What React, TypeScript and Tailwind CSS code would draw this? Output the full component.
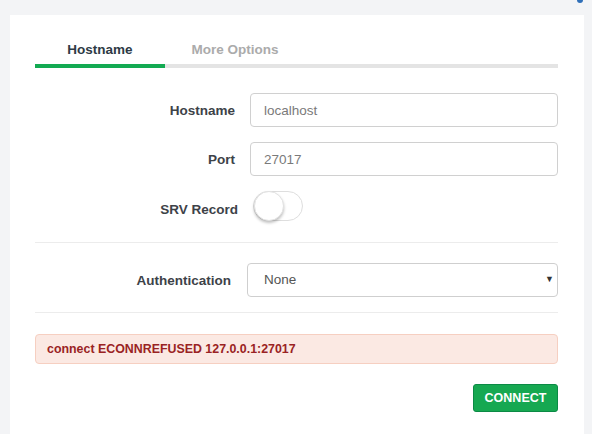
import React from 'react'

const font = { fontFamily: '"Liberation Sans", Arial, sans-serif' }

function Field({ label, placeholder }: { label: string; placeholder: string }) {
  return (
    <div className="flex items-center gap-[15px]">
      <label className="w-[200px] pt-[2px] text-right text-[13.5px] font-bold text-[#3d4248]">{label}</label>
      <input
        readOnly
        placeholder={placeholder}
        className="h-[34px] flex-1 rounded-[4px] border border-[#d0d0d0] bg-white pl-[13px] pr-3 text-[13.5px] text-[#555] outline-none placeholder:text-[#7a7a7a]"
      />
    </div>
  )
}

export default function App() {
  return (
    <div style={font} className="relative flex h-[434px] flex-col bg-[#f3f4f6] pl-[10px] pr-[8px] pt-[15px]">
      <div className="absolute right-[9px] top-0 h-[3px] w-[6px] rounded-b-full bg-[#2f6fb8]" />
      <div className="flex-1 bg-white px-[25px] pr-[26px] pt-[24px]">
        {/* tabs */}
        <div className="flex">
          <div className="flex h-[25px] w-[130px] items-center justify-center pb-[3px] text-[13.5px] font-bold text-[#2d3a45]">
            Hostname
          </div>
          <div className="flex h-[25px] w-[140px] items-center justify-center pb-[3px] text-[13.5px] font-bold text-[#ababab]">
            More Options
          </div>
        </div>
        <div className="flex h-[4px] bg-[#e4e4e4]">
          <div className="w-[130px] bg-[#13aa52]" />
        </div>

        <div className="mt-[25px] flex flex-col gap-[15px]">
          <Field label="Hostname" placeholder="localhost" />
          <Field label="Port" placeholder="27017" />
          <div className="flex items-center gap-[15px]">
            <label className="w-[203px] pt-[9px] text-right text-[13.5px] font-bold text-[#3d4248]">SRV Record</label>
            <div className="relative h-[30px] w-[50px] rounded-full border border-[#dedede] bg-white">
              <div className="absolute left-0 top-[-1px] h-[30px] w-[30px] rounded-full border border-[#e2e2e2] bg-white shadow-[0_2px_3px_rgba(0,0,0,0.25)]" />
            </div>
          </div>
        </div>

        <div className="mt-[21px] h-px bg-[#ececec]" />

        <div className="mt-[20px] flex items-center gap-[16px]">
          <label className="w-[196px] pt-[2px] text-right text-[13.5px] font-bold text-[#3d4248]">Authentication</label>
          <div className="flex h-[34px] flex-1 items-center justify-between rounded-[4px] border border-[#cfcfcf] bg-white pl-[16px] pr-[3px] text-[13.5px] text-[#555]">
            <span>None</span>
            <span className="text-[9px] text-[#333]">▼</span>
          </div>
        </div>

        <div className="mt-[15px] h-px bg-[#ececec]" />

        <div className="mt-[21px] flex h-[30px] items-center rounded-[4px] border border-[#f6cfc1] bg-[#fbe9e3] px-[11px] pt-px text-[12.4px] font-bold text-[#9a2323]">
          connect ECONNREFUSED 127.0.0.1:27017
        </div>

        <div className="mt-[20px] flex justify-end">
          <button className="h-[28px] w-[85px] rounded-[3px] border border-[#0b8a45] bg-[#16a851] text-[12.5px] font-bold text-white">
            CONNECT
          </button>
        </div>
      </div>
    </div>
  )
}
